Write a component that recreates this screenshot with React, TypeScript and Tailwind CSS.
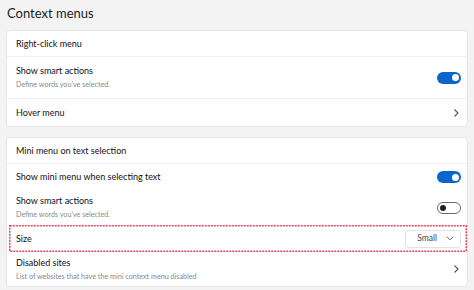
function Toggle({ on }: { on: boolean }) {
  return on ? (
    <div className="w-[24px] h-[12px] rounded-full bg-[#0a66c8] flex items-center justify-end px-[2px]">
      <div className="w-[7px] h-[7px] rounded-full bg-white" />
    </div>
  ) : (
    <div className="w-[24px] h-[12px] rounded-full border border-[#6b6b6b] bg-white flex items-center px-[2px]">
      <div className="w-[6px] h-[6px] rounded-full bg-[#222]" />
    </div>
  )
}

function Chevron() {
  return (
    <svg width="8" height="10" viewBox="0 0 8 10" fill="none" className="mr-[1px]">
      <path d="M2.5 1.5 L6 5 L2.5 8.5" stroke="#555" strokeWidth="1.1" />
    </svg>
  )
}

export default function App() {
  return (
    <div
      className="w-[474px] h-[290px] bg-[#f3f3f3] overflow-hidden"
      style={{ fontFamily: 'Lato, "Noto Sans", sans-serif' }}
    >
      <h1 className="pl-[7px] pt-[3px] h-[30px] text-[13px] leading-[20px] text-[#1b1b1b]">Context menus</h1>

      <div className="mx-[6px] w-[462px] bg-white border border-[#e6e6e6] rounded-[4px]">
        <div className="h-[26px] pl-[9px] pr-[6px] flex items-center border-b border-[#f0f0f0] text-[9px] text-[#111]">
          Right-click menu
        </div>
        <div className="h-[42px] pl-[9px] pr-[6px] flex items-center justify-between border-b border-[#f0f0f0]">
          <div className="flex flex-col">
            <span className="text-[9px] leading-[14px] text-[#111]">Show smart actions</span>
            <span className="text-[7.2px] leading-[12px] mt-[1px] text-[#8a8a8a]">Define words you've selected.</span>
          </div>
          <Toggle on />
        </div>
        <div className="h-[27px] pl-[9px] pr-[6px] flex items-center justify-between text-[9px] text-[#111]">
          Hover menu
          <Chevron />
        </div>
      </div>

      <div className="mx-[6px] mt-[10px] w-[462px] bg-white border border-[#e6e6e6] rounded-[4px]">
        <div className="h-[26px] pl-[9px] pr-[6px] flex items-center border-b border-[#f0f0f0] text-[9px] text-[#111]">
          Mini menu on text selection
        </div>
        <div className="h-[26px] pl-[9px] pr-[6px] flex items-center justify-between text-[9px] text-[#111]">
          Show mini menu when selecting text
          <Toggle on />
        </div>
        <div className="h-[35px] pl-[9px] pr-[6px] flex items-center justify-between">
          <div className="flex flex-col">
            <span className="text-[9px] leading-[14px] text-[#111]">Show smart actions</span>
            <span className="text-[7.2px] leading-[12px] mt-[1px] text-[#8a8a8a]">Define words you've selected.</span>
          </div>
          <Toggle on={false} />
        </div>
        <div className="relative h-[27px] pl-[9px] pr-[6px] flex items-center justify-between text-[9px] text-[#111]">
          Size
          <div className="w-[56px] h-[18px] border border-[#e2e2e2] rounded-[3px] flex items-center justify-end gap-[9px] pr-[6px] text-[8.5px] text-[#444]">
            Small
            <svg width="8" height="5" viewBox="0 0 8 5" fill="none">
              <path d="M1 0.8 L4 3.8 L7 0.8" stroke="#555" strokeWidth="1" />
            </svg>
          </div>
          {/* red dashed highlight drawn over the row */}
          <svg className="absolute left-[2px] top-0 pointer-events-none" width="458" height="27">
            <rect x="0.75" y="0.75" width="456.5" height="25.5" fill="none" stroke="#e04858" strokeWidth="1.5" strokeDasharray="2 1" />
          </svg>
        </div>
        <div className="h-[34px] pl-[9px] pr-[6px] flex items-center justify-between">
          <div className="flex flex-col">
            <span className="text-[9px] leading-[14px] text-[#111]">Disabled sites</span>
            <span className="text-[7.2px] leading-[12px] mt-[1px] text-[#8a8a8a]">
              List of websites that have the mini context menu disabled
            </span>
          </div>
          <Chevron />
        </div>
      </div>
    </div>
  )
}
